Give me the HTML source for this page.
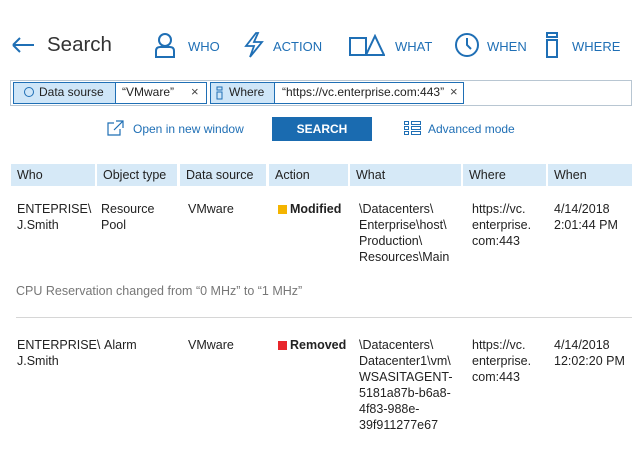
<!DOCTYPE html>
<html><head><meta charset="utf-8"><style>
*{margin:0;padding:0;box-sizing:border-box}
body{width:640px;height:450px;background:#fff;font-family:"Liberation Sans",sans-serif;color:#222;position:relative;overflow:hidden;font-size:12.5px}
.a{position:absolute;white-space:nowrap}
.blue{color:#1f6fb5}
.nav{font-size:13px;color:#1f6fb5;top:39px}
.th{position:absolute;top:164px;height:22px;background:#d6e9f7;line-height:22px;padding-left:6px;font-size:12.5px}
.c{position:absolute;line-height:16px;font-size:12.5px}
</style></head><body>
<svg class="a" style="left:12px;top:37px" width="24" height="16"><path d="M1 8H22M1 8L8 1M1 8L8 15" stroke="#1f6fb5" stroke-width="2" fill="none"/></svg>
<div class="a" style="left:47px;top:33px;font-size:20.5px;color:#333">Search</div>
<svg class="a" style="left:154px;top:32px" width="22" height="26"><circle cx="11" cy="8" r="6" stroke="#1f6fb5" stroke-width="2" fill="none"/><path d="M2 25V19Q2 15 6 15H16Q20 15 20 19V25Z" stroke="#1f6fb5" stroke-width="2" fill="none"/></svg>
<div class="a nav" style="left:188px">WHO</div>
<svg class="a" style="left:242px;top:32px" width="22" height="26"><path d="M14 1L4 14H12L8 25L20 10H12L16 1Z" stroke="#1f6fb5" stroke-width="1.8" fill="none"/></svg>
<div class="a nav" style="left:273px">ACTION</div>
<svg class="a" style="left:349px;top:34px" width="36" height="22"><rect x="1" y="4" width="16" height="17" stroke="#1f6fb5" stroke-width="2" fill="none"/><path d="M17 21L26 2L35 21Z" stroke="#1f6fb5" stroke-width="2" fill="none"/></svg>
<div class="a nav" style="left:395px">WHAT</div>
<svg class="a" style="left:454px;top:32px" width="26" height="26"><circle cx="13" cy="13" r="11" stroke="#1f6fb5" stroke-width="2" fill="none"/><path d="M13 6V13L17 17" stroke="#1f6fb5" stroke-width="2" fill="none"/></svg>
<div class="a nav" style="left:487px">WHEN</div>
<svg class="a" style="left:546px;top:32px" width="14" height="26"><rect x="1" y="1" width="10" height="4" stroke="#1f6fb5" stroke-width="2" fill="none"/><rect x="1" y="8" width="10" height="17" stroke="#1f6fb5" stroke-width="2" fill="none"/></svg>
<div class="a nav" style="left:572px">WHERE</div>

<div class="a" style="left:10px;top:80px;width:622px;height:26px;border:1px solid #b8c6d2"></div>
<div class="a" style="left:13px;top:82px;width:194px;height:22px;border:1px solid #1f6fb5"></div>
<div class="a" style="left:14px;top:83px;width:102px;height:20px;background:#cfe6f8;border-right:1px solid #1f6fb5"></div>
<div class="a" style="left:24px;top:87px;width:10px;height:10px;border:1px solid #1f6fb5;border-radius:50%"></div>
<div class="a" style="left:39px;top:85px;font-size:12px">Data sourse</div>
<div class="a" style="left:122px;top:85px;font-size:12px">“VMware”</div>
<div class="a" style="left:191px;top:84px;font-size:13px;color:#444">×</div>
<div class="a" style="left:210px;top:82px;width:254px;height:22px;border:1px solid #1f6fb5"></div>
<div class="a" style="left:211px;top:83px;width:64px;height:20px;background:#cfe6f8;border-right:1px solid #1f6fb5"></div>
<svg class="a" style="left:216px;top:86px" width="8" height="14"><rect x="1" y="1" width="5" height="3" stroke="#1f6fb5" fill="none"/><rect x="1" y="6" width="5" height="7" stroke="#1f6fb5" fill="none"/></svg>
<div class="a" style="left:229px;top:85px;font-size:12px">Where</div>
<div class="a" style="left:282px;top:85px;font-size:12px">“https://vc.enterprise.com:443”</div>
<div class="a" style="left:450px;top:84px;font-size:13px;color:#444">×</div>

<svg class="a" style="left:106px;top:120px" width="18" height="16"><path d="M8 3H2V15H14V9M10 1H17V8M17 1L8 10" stroke="#1f6fb5" stroke-width="1.2" fill="none"/></svg>
<div class="a blue" style="left:133px;top:122px;font-size:12px">Open in new window</div>
<div class="a" style="left:272px;top:117px;width:100px;height:24px;background:#1a6bb0;color:#fff;font-weight:bold;font-size:12px;text-align:center;line-height:24px">SEARCH</div>
<svg class="a" style="left:404px;top:121px" width="18" height="15"><g stroke="#1f6fb5" fill="none"><rect x="0.5" y="0.5" width="4" height="3"/><rect x="0.5" y="5.5" width="4" height="3"/><rect x="0.5" y="10.5" width="4" height="3"/><rect x="7.5" y="0.5" width="9" height="3"/><rect x="7.5" y="5.5" width="9" height="3"/><rect x="7.5" y="10.5" width="9" height="3"/></g></svg>
<div class="a blue" style="left:428px;top:122px;font-size:12px">Advanced mode</div>

<div class="th" style="left:11px;width:84px">Who</div>
<div class="th" style="left:95px;width:82px;border-left:2px solid #fff">Object type</div>
<div class="th" style="left:180px;width:86px">Data source</div>
<div class="th" style="left:268px;width:80px;border-left:1px solid #fff">Action</div>
<div class="th" style="left:350px;width:111px">What</div>
<div class="th" style="left:463px;width:83px">Where</div>
<div class="th" style="left:548px;width:84px">When</div>

<div class="c" style="left:17px;top:201px">ENTEPRISE\<br>J.Smith</div>
<div class="c" style="left:101px;top:201px">Resource<br>Pool</div>
<div class="c" style="left:188px;top:201px">VMware</div>
<div class="a" style="left:278px;top:205px;width:9px;height:9px;background:#f4b400"></div>
<div class="c" style="left:290px;top:201px;font-weight:bold">Modified</div>
<div class="c" style="left:359px;top:201px">\Datacenters\<br>Enterprise\host\<br>Production\<br>Resources\Main</div>
<div class="c" style="left:472px;top:201px">https://vc.<br>enterprise.<br>com:443</div>
<div class="c" style="left:554px;top:201px">4/14/2018<br>2:01:44 PM</div>

<div class="c" style="left:16px;top:283px;color:#777">CPU Reservation changed from “0 MHz” to “1 MHz”</div>
<div class="a" style="left:16px;top:317px;width:616px;height:1px;background:#d6d6d6"></div>

<div class="c" style="left:17px;top:337px">ENTERPRISE\<br>J.Smith</div>
<div class="c" style="left:104px;top:337px">Alarm</div>
<div class="c" style="left:188px;top:337px">VMware</div>
<div class="a" style="left:278px;top:341px;width:9px;height:9px;background:#e8262b"></div>
<div class="c" style="left:290px;top:337px;font-weight:bold">Removed</div>
<div class="c" style="left:359px;top:337px">\Datacenters\<br>Datacenter1\vm\<br>WSASITAGENT-<br>5181a87b-b6a8-<br>4f83-988e-<br>39f911277e67</div>
<div class="c" style="left:472px;top:337px">https://vc.<br>enterprise.<br>com:443</div>
<div class="c" style="left:554px;top:337px">4/14/2018<br>12:02:20 PM</div>
</body></html>
